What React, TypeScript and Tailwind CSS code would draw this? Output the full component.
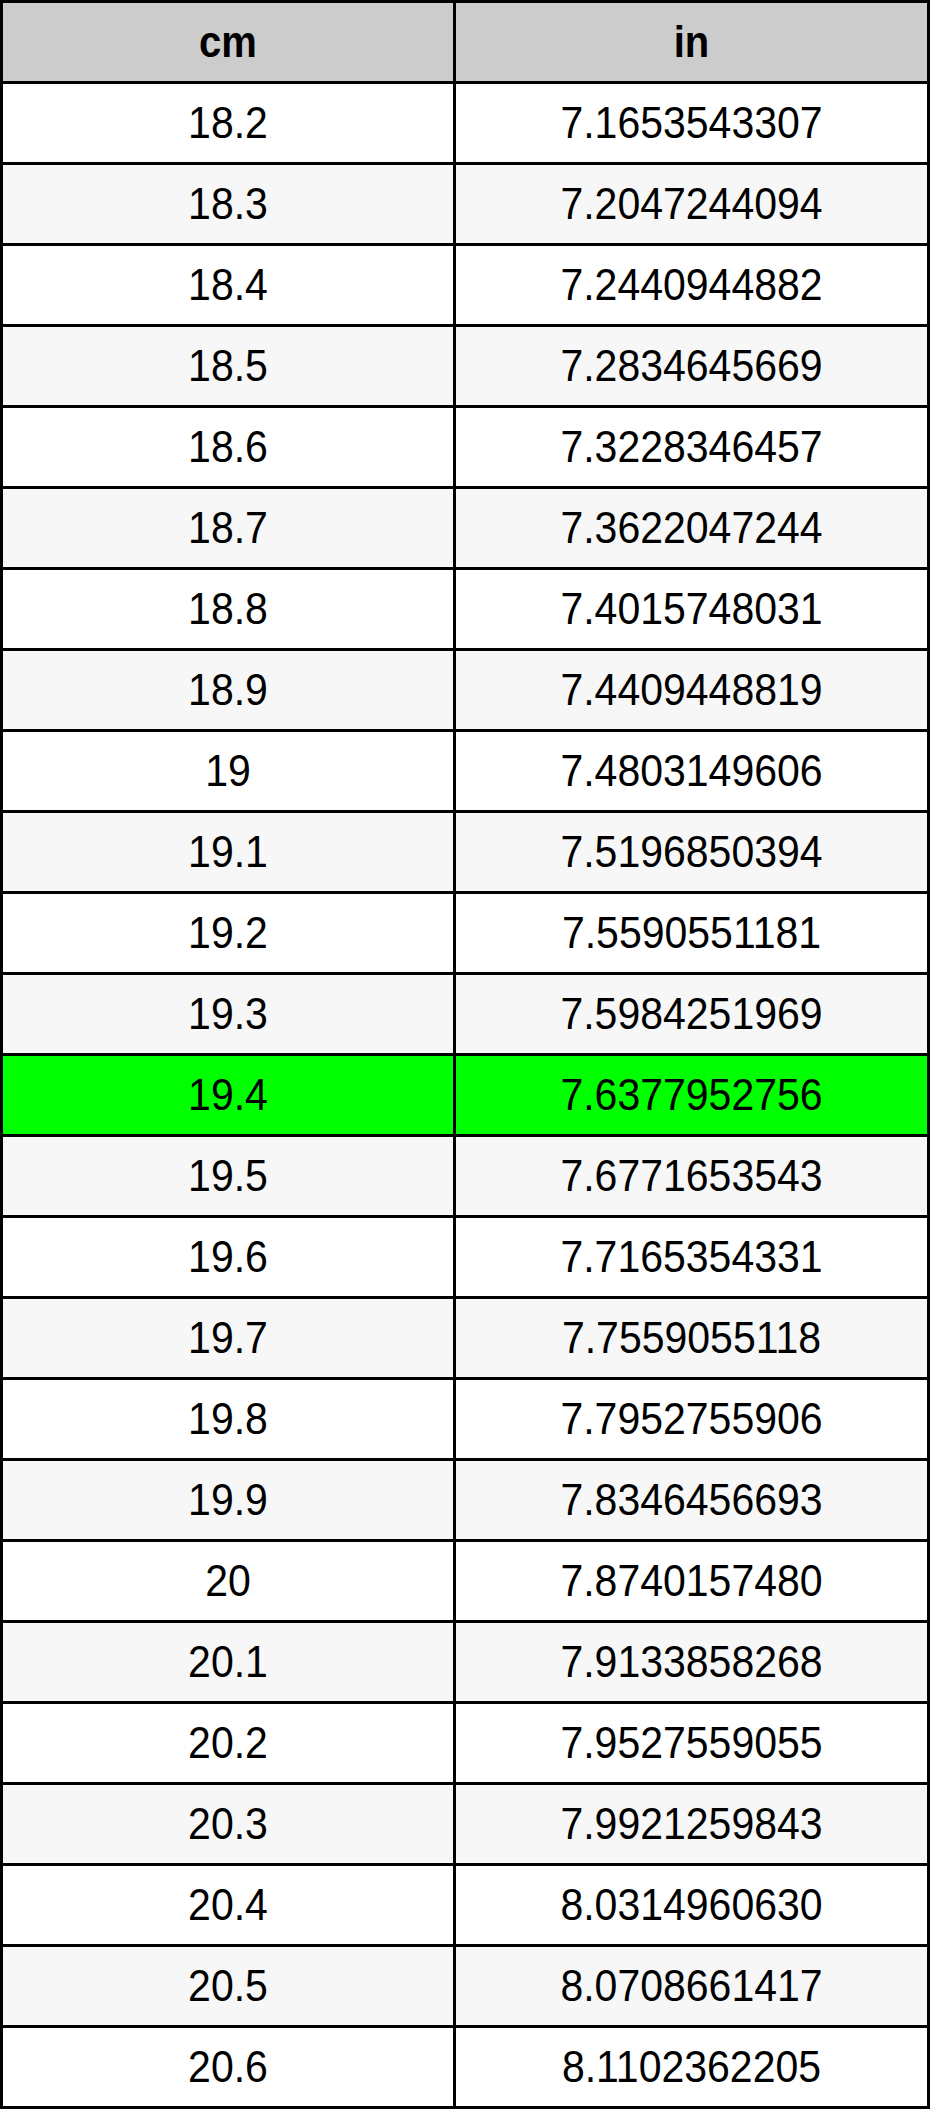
const ROWS: [string, string][] = [
  ['18.2', '7.1653543307'],
  ['18.3', '7.2047244094'],
  ['18.4', '7.2440944882'],
  ['18.5', '7.2834645669'],
  ['18.6', '7.3228346457'],
  ['18.7', '7.3622047244'],
  ['18.8', '7.4015748031'],
  ['18.9', '7.4409448819'],
  ['19', '7.4803149606'],
  ['19.1', '7.5196850394'],
  ['19.2', '7.5590551181'],
  ['19.3', '7.5984251969'],
  ['19.4', '7.6377952756'],
  ['19.5', '7.6771653543'],
  ['19.6', '7.7165354331'],
  ['19.7', '7.7559055118'],
  ['19.8', '7.7952755906'],
  ['19.9', '7.8346456693'],
  ['20', '7.8740157480'],
  ['20.1', '7.9133858268'],
  ['20.2', '7.9527559055'],
  ['20.3', '7.9921259843'],
  ['20.4', '8.0314960630'],
  ['20.5', '8.0708661417'],
  ['20.6', '8.1102362205'],
];

const HIGHLIGHT = '19.4';

function Cell({ wide, children }: { wide?: boolean; children: React.ReactNode }) {
  return (
    <div
      className={`${wide ? 'w-[471px]' : 'w-[450px]'} h-[78px] box-content border-r-[3px] border-b-[3px] border-black flex items-center justify-center`}
    >
      <span className="inline-block scale-y-[1.1] leading-none">{children}</span>
    </div>
  );
}

export default function App() {
  return (
    <div className="bg-white min-h-screen font-['Liberation_Sans',Arial,sans-serif] text-black">
      <div className="w-[930px] border-l-[3px] border-t-[3px] border-black">
        <div className="flex bg-[#cccccc] font-bold text-[40px]">
          <Cell>cm</Cell>
          <Cell wide>in</Cell>
        </div>
        {ROWS.map(([cm, inch], i) => {
          const bg =
            cm === HIGHLIGHT
              ? 'bg-[#00ff00]'
              : i % 2 === 0
                ? 'bg-white'
                : 'bg-[#f7f7f7]';
          return (
            <div key={cm} className={`flex text-[41px] ${bg}`}>
              <Cell>{cm}</Cell>
              <Cell wide>{inch}</Cell>
            </div>
          );
        })}
      </div>
    </div>
  );
}
